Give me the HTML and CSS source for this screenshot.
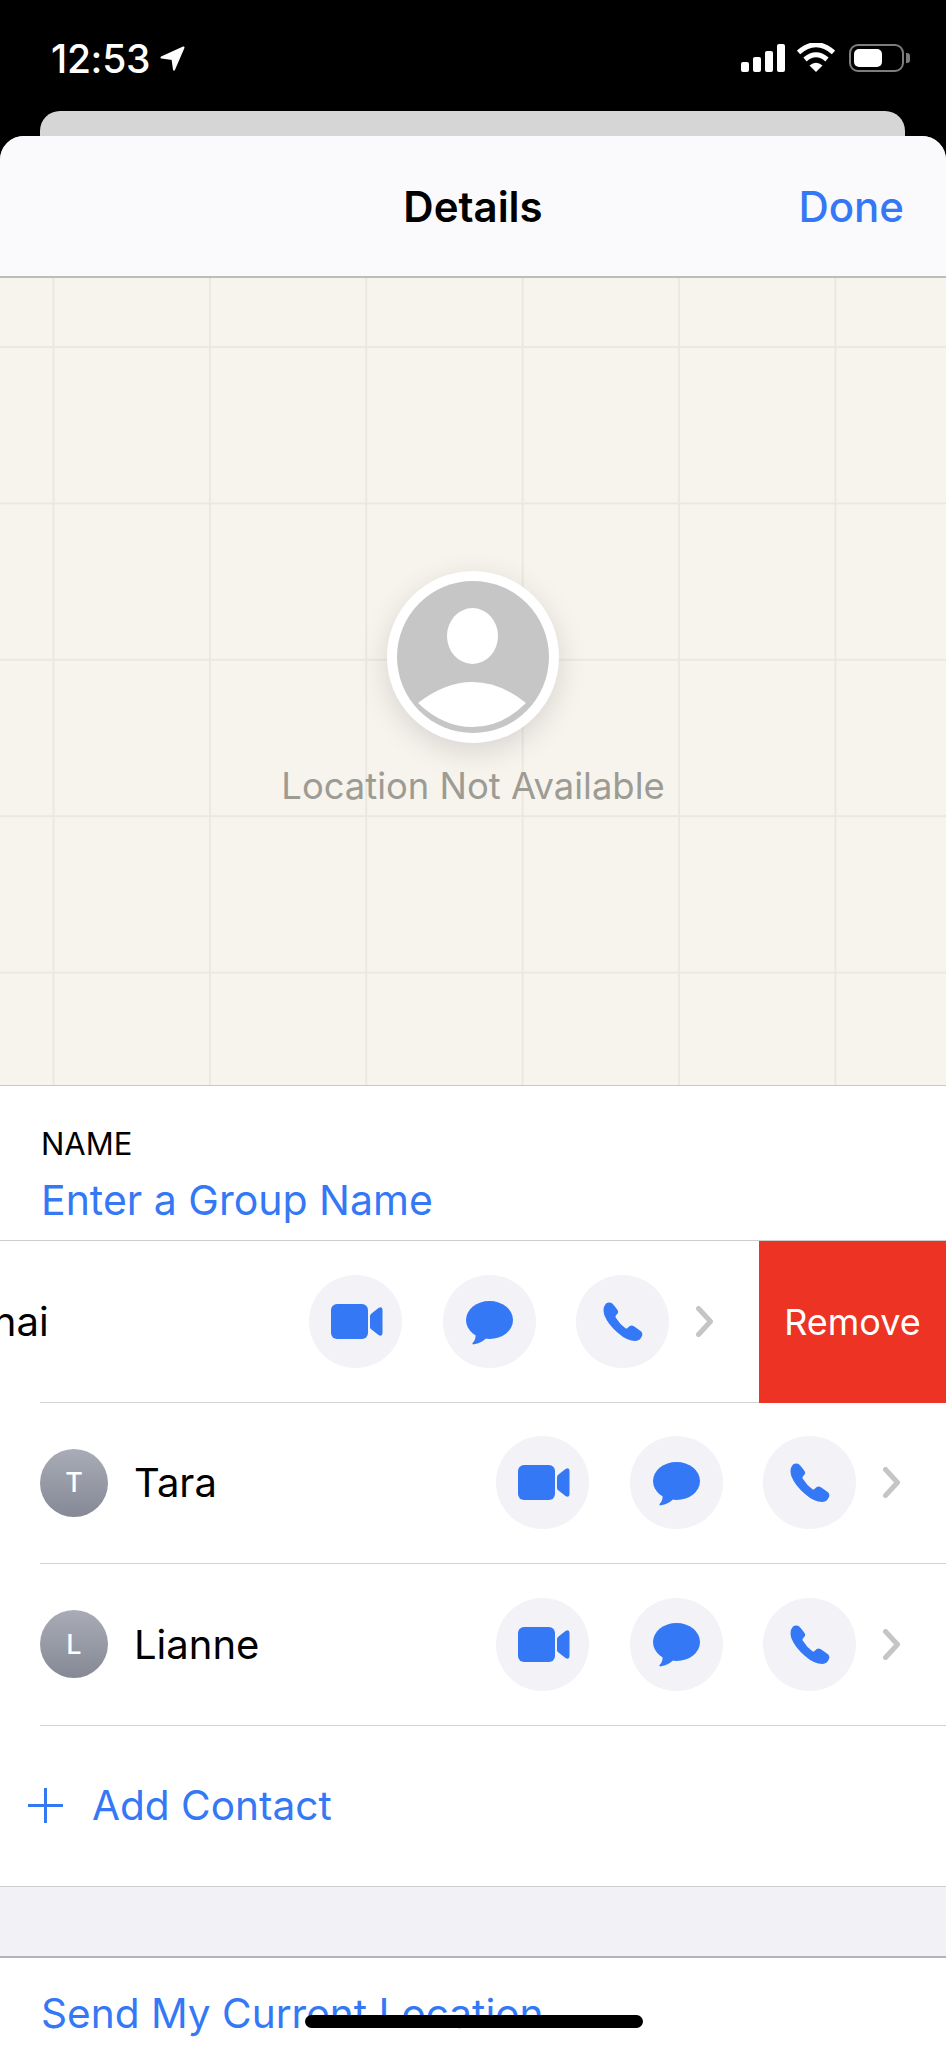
FILE: index.html
```html
<!DOCTYPE html>
<html lang="en">
<head>
    <meta charset="UTF-8">
    <meta name="viewport" content="width=device-width, initial-scale=1.0">
    <title>Details</title>
    <link rel="stylesheet" href="styles.css">
</head>
<body>
    <svg class="sprite" width="0" height="0">
        <symbol id="icon-video" viewBox="0 0 52 35">
            <rect width="37" height="35" rx="6"/>
            <path d="M39 12Q39 10.5 40.5 9.5L47.5 4Q51.5 2 51.5 6V29Q51.5 33 47.5 31L40.5 25.5Q39 24.5 39 23Z"/>
        </symbol>
        <symbol id="icon-message" viewBox="0 0 47 44">
            <ellipse cx="23.5" cy="19" rx="23.5" ry="19"/>
            <path d="M9 30Q11 38 6.5 42Q6 43.8 8 43.3Q15 42 20 37.5Z"/>
        </symbol>
        <symbol id="icon-phone" viewBox="0 0 40 39">
            <path d="M3 1.5Q5.5-.3 8 .8Q10 1.8 14.5 8Q15.8 10 14.5 11.5L12.7 13.8Q12.2 14.8 13 16Q17 22.5 22.5 26.3Q23.5 27 24.5 26L26.8 24Q28.5 22.8 30.5 24Q36 27.5 38.2 29.5Q40 31.5 39 34Q37 38.8 32.5 39Q24 39 15 31Q5 22.5 1.5 13.5Q-1 6 3 1.5Z"/>
        </symbol>
        <symbol id="icon-chevron" viewBox="0 0 18 31">
            <path d="M2.5 2.5L14.5 15.5L2.5 28.5" fill="none" stroke="#c5c5c7" stroke-width="5" stroke-linecap="round" stroke-linejoin="round"/>
        </symbol>
    </svg>

    <div id="screen">
        <div class="status-bar">
            <div class="status-time">
                <span>12:53</span>
                <svg class="status-arrow" width="25" height="25" viewBox="0 0 25 25">
                    <path d="M23.5 1.5L1.5 11.5L12.5 13L14 23.5Z" fill="#fff" stroke="#fff" stroke-width="2" stroke-linejoin="round"/>
                </svg>
            </div>
            <div class="status-icons">
                <div class="signal">
                    <span class="bar bar1"></span>
                    <span class="bar bar2"></span>
                    <span class="bar bar3"></span>
                    <span class="bar bar4"></span>
                </div>
                <svg class="wifi" width="38" height="29" viewBox="0 0 38 29">
                    <path d="M19 29L12.5 22.5Q19 17 25.5 22.5Z" fill="#fff"/>
                    <path d="M8 16.5Q19 7 30 16.5" fill="none" stroke="#fff" stroke-width="5"/>
                    <path d="M1.5 9.5Q19-6 36.5 9.5" fill="none" stroke="#fff" stroke-width="5"/>
                </svg>
                <div class="battery">
                    <div class="battery-level"></div>
                </div>
                <div class="battery-nub"></div>
            </div>
        </div>

        <div class="back-card"></div>

        <div class="sheet">
            <div class="nav">
                <div></div>
                <div class="nav-title">Details</div>
                <div class="nav-done">Done</div>
            </div>

            <div class="map">
                <div class="map-avatar">
                    <svg width="152" height="152" viewBox="0 0 152 152">
                        <circle cx="76" cy="76" r="76" fill="#c7c6c6"/>
                        <ellipse cx="75.5" cy="55" rx="25.5" ry="28" fill="#fff"/>
                        <path d="M21 122Q48 101 75.5 101Q103 101 129 122Q105 146 75.5 146Q46 146 21 122Z" fill="#fff"/>
                    </svg>
                </div>
                <div class="map-label">Location Not Available</div>
            </div>

            <div class="name-section">
                <div class="name-label">NAME</div>
                <div class="name-value">Enter a Group Name</div>
            </div>

            <div class="swipe-row">
                <div class="contact">
                    <div class="contact-avatar">M</div>
                    <div class="contact-name">Minai</div>
                    <div class="action"><svg class="video"><use href="#icon-video"/></svg></div>
                    <div class="action"><svg class="message"><use href="#icon-message"/></svg></div>
                    <div class="action"><svg class="phone"><use href="#icon-phone"/></svg></div>
                    <svg class="chevron"><use href="#icon-chevron"/></svg>
                </div>
                <div class="remove">Remove</div>
            </div>

            <div class="contact">
                <div class="contact-avatar">T</div>
                <div class="contact-name">Tara</div>
                <div class="action"><svg class="video"><use href="#icon-video"/></svg></div>
                <div class="action"><svg class="message"><use href="#icon-message"/></svg></div>
                <div class="action"><svg class="phone"><use href="#icon-phone"/></svg></div>
                <svg class="chevron"><use href="#icon-chevron"/></svg>
            </div>

            <div class="contact">
                <div class="contact-avatar">L</div>
                <div class="contact-name">Lianne</div>
                <div class="action"><svg class="video"><use href="#icon-video"/></svg></div>
                <div class="action"><svg class="message"><use href="#icon-message"/></svg></div>
                <div class="action"><svg class="phone"><use href="#icon-phone"/></svg></div>
                <svg class="chevron"><use href="#icon-chevron"/></svg>
            </div>

            <div class="add-contact">
                <svg class="plus" width="35" height="35" viewBox="0 0 35 35">
                    <path d="M17.5 0V35M0 17.5H35" stroke="#3478f6" stroke-width="3"/>
                </svg>
                <span>Add Contact</span>
            </div>

            <div class="band"></div>

            <div class="send-location">Send My Current Location</div>
        </div>

        <div class="home-bar"></div>
    </div>
</body>
</html>
```

FILE: styles.css
```css
body {
    margin: 0;
    background: #000;
    font-family: Inter, "Noto Sans", sans-serif;
    color: #000;
}

.sprite {
    display: block;
    height: 0;
}

#screen {
    position: relative;
    width: 946px;
    height: 2048px;
    overflow: hidden;
    background: #000;
}

.status-bar {
    height: 111px;
    box-sizing: border-box;
    padding: 38px 36px 0 51px;
    display: flex;
    justify-content: space-between;
    align-items: flex-start;
}

.status-time {
    display: flex;
    align-items: center;
    gap: 10px;
    color: #fff;
    font-size: 39px;
    font-weight: 500;
    line-height: 42px;
    letter-spacing: -0.3px;
}

.status-arrow {
    margin-top: -2px;
}

.status-icons {
    display: flex;
    align-items: flex-start;
    margin-top: 5px;
}

.signal {
    display: flex;
    align-items: flex-end;
    gap: 4px;
    height: 28px;
    margin-top: 1px;
    margin-right: 12px;
}

.bar {
    width: 8px;
    background: #fff;
    border-radius: 2px;
}

.bar1 { height: 10px; }
.bar2 { height: 15px; }
.bar3 { height: 21px; }
.bar4 { height: 28px; }

.wifi {
    margin-right: 14px;
}

.battery {
    width: 55px;
    height: 28px;
    box-sizing: border-box;
    margin-top: 1px;
    padding: 3px;
    border: 2px solid #7d7d7d;
    border-radius: 9px;
}

.battery-level {
    width: 28px;
    height: 100%;
    background: #fff;
    border-radius: 5px;
}

.battery-nub {
    width: 4px;
    height: 10px;
    margin: 10px 0 0 2px;
    background: #7d7d7d;
    border-radius: 0 3px 3px 0;
}

.back-card {
    height: 25px;
    margin: 0 41px 0 40px;
    background: #d6d6d6;
    border-radius: 20px 20px 0 0;
}

.sheet {
    height: 1912px;
    background: #fff;
    border-radius: 24px 24px 0 0;
    overflow: hidden;
}

.nav {
    height: 142px;
    box-sizing: border-box;
    display: grid;
    grid-template-columns: 1fr auto 1fr;
    align-items: center;
    background: #fafafc;
    border-bottom: 2px solid #bcbcbc;
    font-size: 42px;
}

.nav-title {
    font-weight: 600;
}

.nav-done {
    justify-self: end;
    padding-right: 42px;
    color: #3478f6;
    font-weight: 500;
}

.map {
    height: 808px;
    box-sizing: border-box;
    padding-top: 293px;
    display: flex;
    flex-direction: column;
    align-items: center;
    background-color: #f7f4ee;
    background-image:
        linear-gradient(to right, #ebe8e2 2px, transparent 2px),
        linear-gradient(to bottom, #ebe8e2 2px, transparent 2px);
    background-size: 156.4px 100%, 100% 156.4px;
    background-position: 52.5px 0, 0 68px;
    border-bottom: 1px solid #c8c8c8;
}

.map-avatar {
    width: 152px;
    height: 152px;
    padding: 10px;
    background: #fff;
    border-radius: 50%;
    box-shadow: 0 8px 30px rgba(0, 0, 0, 0.13);
}

.map-avatar svg {
    display: block;
}

.map-label {
    margin-top: 21px;
    color: #9c9b94;
    font-size: 36.4px;
    line-height: 44px;
}

.name-section {
    height: 155px;
    box-sizing: border-box;
    padding: 40px 0 0 41px;
    border-bottom: 1px solid #cdcdcd;
}

.name-label {
    font-size: 31px;
    line-height: 36px;
}

.name-value {
    margin-top: 14px;
    color: #3478f6;
    font-size: 41px;
    line-height: 48px;
}

.swipe-row {
    position: relative;
    display: flex;
    width: 1133px;
    margin-left: -187px;
}

.swipe-row::after {
    content: "";
    position: absolute;
    left: 227px;
    right: 187px;
    bottom: 0;
    height: 1px;
    background: #d2d2d2;
}

.contact {
    height: 161.5px;
    box-sizing: border-box;
    margin-left: 40px;
    padding-right: 45px;
    display: flex;
    align-items: center;
    border-bottom: 1px solid #d2d2d2;
}

.swipe-row .contact {
    flex: 0 0 906px;
    border-bottom: none;
}

.contact-avatar {
    width: 68px;
    height: 68px;
    margin-right: 26px;
    display: flex;
    align-items: center;
    justify-content: center;
    background: linear-gradient(#a9acb6, #858995);
    border-radius: 50%;
    color: #fff;
    font-size: 27px;
    font-weight: 500;
}

.contact-name {
    flex: 1;
    font-size: 40px;
    line-height: 48px;
    padding-top: 1px;
}

.action {
    width: 93px;
    height: 93px;
    margin-right: 40.5px;
    display: flex;
    align-items: center;
    justify-content: center;
    background: #f2f2f7;
    border-radius: 50%;
    fill: #3478f6;
}

.action:nth-last-child(2) {
    margin-right: 27px;
}

.video {
    width: 52px;
    height: 35px;
    margin-left: 2px;
}

.message {
    width: 47px;
    height: 44px;
    margin-top: 2px;
}

.phone {
    width: 40px;
    height: 39px;
}

.chevron {
    width: 18px;
    height: 31px;
}

.remove {
    flex: 0 0 187px;
    height: 161.5px;
    display: flex;
    align-items: center;
    justify-content: center;
    background: #ec3324;
    color: #fff;
    font-size: 36px;
}

.add-contact {
    height: 161.5px;
    box-sizing: border-box;
    padding-left: 28px;
    display: flex;
    align-items: center;
    gap: 29px;
    border-bottom: 1px solid #cdcdcd;
    color: #3478f6;
    font-size: 40.6px;
}

.band {
    height: 71px;
    box-sizing: border-box;
    background: #f1f1f6;
    border-bottom: 2px solid #b4b4b4;
}

.send-location {
    padding: 32px 0 0 41px;
    color: #3478f6;
    font-size: 40.6px;
    line-height: 48px;
}

.home-bar {
    position: absolute;
    left: 305px;
    bottom: 20px;
    width: 338px;
    height: 13px;
    background: #000;
    border-radius: 7px;
}
```
